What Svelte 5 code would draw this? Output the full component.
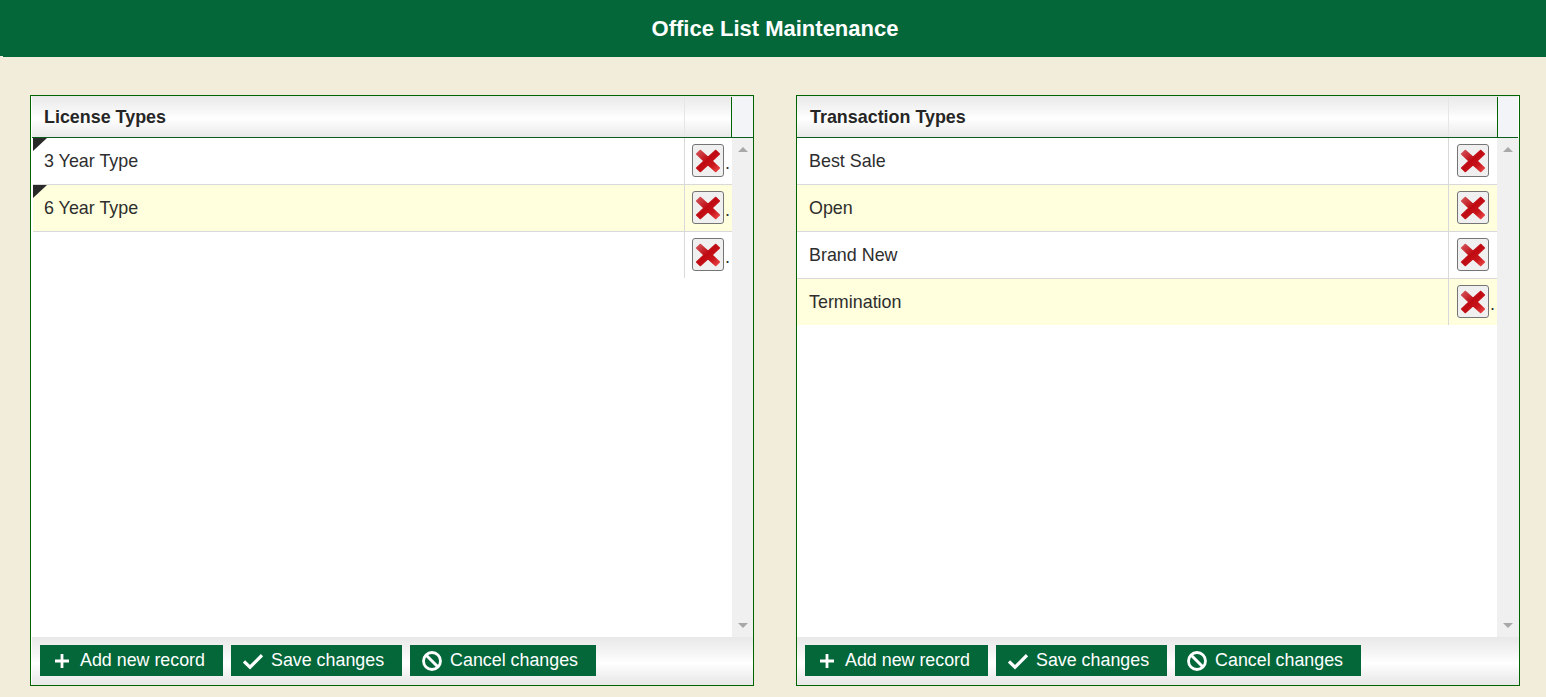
<script>
  const panels = [
    {
      title: 'License Types',
      flagged: true,
      rows: [
        { name: '3 Year Type', dirty: true, dot: true },
        { name: '6 Year Type', dirty: true, dot: true },
        { name: '', dirty: false, dot: true }
      ]
    },
    {
      title: 'Transaction Types',
      flagged: false,
      rows: [
        { name: 'Best Sale' },
        { name: 'Open' },
        { name: 'Brand New' },
        { name: 'Termination', dot: true }
      ]
    }
  ];
</script>

<div class="page">
  <header class="title"><span>Office List Maintenance</span></header>
  <main class="panels">
    {#each panels as panel}
      <section class="panel" class:flagged={panel.flagged}>
        <div class="head">
          <div class="head-title">{panel.title}</div>
          <div class="head-action"></div>
          <div class="head-scroll"></div>
        </div>
        <div class="body">
          <div class="rows">
            {#each panel.rows as row, i}
              <div class="row" class:alt={i % 2 === 1} class:last={i === panel.rows.length - 1}>
                {#if row.dirty}<span class="dirty"></span>{/if}
                <div class="name">{row.name}</div>
                <div class="action">
                  <button class="del" aria-label="Delete">
                    <svg viewBox="0 0 28 28" width="28" height="28">
                      <defs>
                        <linearGradient id="x{panel.title.length}{i}" x1="0" y1="0" x2="1" y2="1">
                          <stop offset="0" stop-color="#d4565a" />
                          <stop offset="0.45" stop-color="#bf0a12" />
                          <stop offset="0.7" stop-color="#c8141a" />
                          <stop offset="1" stop-color="#ee4a4a" />
                        </linearGradient>
                      </defs>
                      <path
                        d="M6.2 3.4 14 10.2 21.8 3.4 25.4 7 18 14 25.4 21 21.8 24.6 14 17.8 6.2 24.6 2.6 21 10 14 2.6 7Z"
                        fill="url(#x{panel.title.length}{i})"
                        stroke="url(#x{panel.title.length}{i})"
                        stroke-width="1.4"
                        stroke-linejoin="round"
                      />
                    </svg>
                  </button>
                  {#if row.dot}<span class="dot">.</span>{/if}
                </div>
              </div>
            {/each}
          </div>
          <div class="scroll">
            <span class="arrow up"></span>
            <span class="arrow down"></span>
          </div>
        </div>
        <div class="foot">
          <button class="btn">
            <svg viewBox="0 0 20 20" width="20" height="20"><path d="M10 3v14M3 10h14" stroke="#fff" stroke-width="2.8" fill="none" /></svg>
            <span>Add new record</span>
          </button>
          <button class="btn">
            <svg viewBox="0 0 20 20" width="20" height="20"><path d="M1 10.5 7 16.2 19 4.2" stroke="#fff" stroke-width="3.2" fill="none" /></svg>
            <span>Save changes</span>
          </button>
          <button class="btn">
            <svg viewBox="0 0 20 20" width="20" height="20"><circle cx="10" cy="10" r="8.5" stroke="#fff" stroke-width="2.8" fill="none" /><path d="M4.5 4.5 15.5 15.5" stroke="#fff" stroke-width="3" /></svg>
            <span>Cancel changes</span>
          </button>
        </div>
      </section>
    {/each}
  </main>
</div>

<style>
  :global(body) {
    margin: 0;
    background: #f2ecdb;
  }
  .page {
    font-family: "Liberation Sans", Arial, sans-serif;
    height: 697px;
    overflow: hidden;
    background: #f2ecdb;
  }
  .title {
    position: relative;
    height: 57px;
    line-height: 57px;
    background: #04673a;
    color: #fff;
    font-size: 22px;
    font-weight: bold;
    text-align: center;
  }
  .title span {
    padding-left: 4px;
  }
  .title::after {
    content: "";
    position: absolute;
    left: 0;
    bottom: 0;
    width: 3px;
    height: 1px;
    background: #f2ecdb;
  }
  .panels {
    display: flex;
    gap: 42px;
    padding: 38px 26px 0 30px;
  }
  .panel {
    box-sizing: border-box;
    width: 724px;
    height: 591px;
    border: 1px solid #006400;
    background: #fff;
    display: flex;
    flex-direction: column;
  }
  .head {
    display: flex;
    height: 42px;
    box-sizing: border-box;
    flex: none;
    margin-right: 1px;
    border-bottom: 1px solid #0b5c20;
    background: linear-gradient(#e9e9e9 0, #f4f4f4 30%, #ffffff 55%, #eeeeee 90%, #e8e8e8 100%);
  }
  .flagged .head {
    margin-right: 0;
    margin-left: 1px;
  }
  .head-title {
    flex: 1;
    padding-left: 13px;
    font-size: 17.9px;
    font-weight: bold;
    line-height: 42px;
    color: #262626;
  }
  .flagged .head-title {
    padding-left: 12px;
  }
  .head-action {
    box-sizing: border-box;
    width: 49px;
    border-left: 1px solid #e6e6e6;
  }
  .flagged .head-action {
    width: 47px;
  }
  .head-scroll {
    box-sizing: border-box;
    width: 21px;
    margin-top: 1px;
    background: #f3f4f7;
    border-left: 1px solid #006400;
  }
  .flagged .head-scroll {
    width: 22px;
  }
  .body {
    flex: 1;
    display: flex;
    min-height: 0;
  }
  .rows {
    flex: 1;
    min-width: 0;
  }
  .flagged .rows {
    padding-left: 2px;
  }
  .row {
    position: relative;
    display: flex;
    height: 47px;
    box-sizing: border-box;
    border-bottom: 1px solid #d9d9d9;
  }
  .row.last {
    height: 46px;
    border-bottom: none;
  }
  .row.alt {
    background: #ffffdd;
  }
  .dirty {
    position: absolute;
    left: 0;
    top: 0;
    width: 0;
    height: 0;
    border-top: 13px solid #2a2a2a;
    border-right: 14px solid transparent;
  }
  .name {
    flex: 1;
    padding-left: 12px;
    font-size: 17.9px;
    line-height: 46px;
    color: #2e2e2e;
  }
  .flagged .name {
    padding-left: 11px;
  }
  .action {
    box-sizing: border-box;
    width: 49px;
    flex: none;
    border-left: 1px solid #d9d9d9;
    padding: 6px 0 0 8px;
    display: flex;
    align-items: flex-start;
    overflow: hidden;
    white-space: nowrap;
  }
  .flagged .action {
    width: 48px;
    padding-left: 7px;
  }
  .del {
    box-sizing: border-box;
    width: 32px;
    height: 33px;
    padding: 0;
    border: 1px solid #757575;
    border-radius: 3px;
    background: #f0f0f0;
    display: flex;
    align-items: center;
    justify-content: center;
    flex: none;
  }
  .del svg {
    filter: blur(0.35px);
  }
  .dot {
    font-size: 17.9px;
    line-height: 38px;
    color: #2e2e2e;
    margin-left: 1px;
  }
  .scroll {
    position: relative;
    width: 22px;
    flex: none;
    background: #f0f0f0;
  }
  .flagged .scroll {
    width: 21px;
  }
  .arrow {
    position: absolute;
    left: 6px;
    width: 0;
    height: 0;
    border-left: 5px solid transparent;
    border-right: 5px solid transparent;
  }
  .arrow.up {
    top: 9px;
    border-bottom: 5px solid #a8a8a8;
  }
  .arrow.down {
    bottom: 9px;
    border-top: 5px solid #a8a8a8;
  }
  .foot {
    flex: none;
    height: 48px;
    box-sizing: border-box;
    display: flex;
    gap: 8px;
    padding: 8px 8px 0;
    background: linear-gradient(#e8e8e8 0, #f4f4f4 30%, #ffffff 55%, #eeeeee 85%, #e8e8e8 100%);
  }
  .flagged .foot {
    margin-left: 1px;
  }
  .btn {
    height: 31px;
    box-sizing: border-box;
    padding: 0 18px 0 12px;
    border: none;
    background: #04673a;
    color: #fff;
    font-family: inherit;
    font-size: 17.85px;
    display: flex;
    align-items: center;
    gap: 8px;
    white-space: nowrap;
  }
</style>
